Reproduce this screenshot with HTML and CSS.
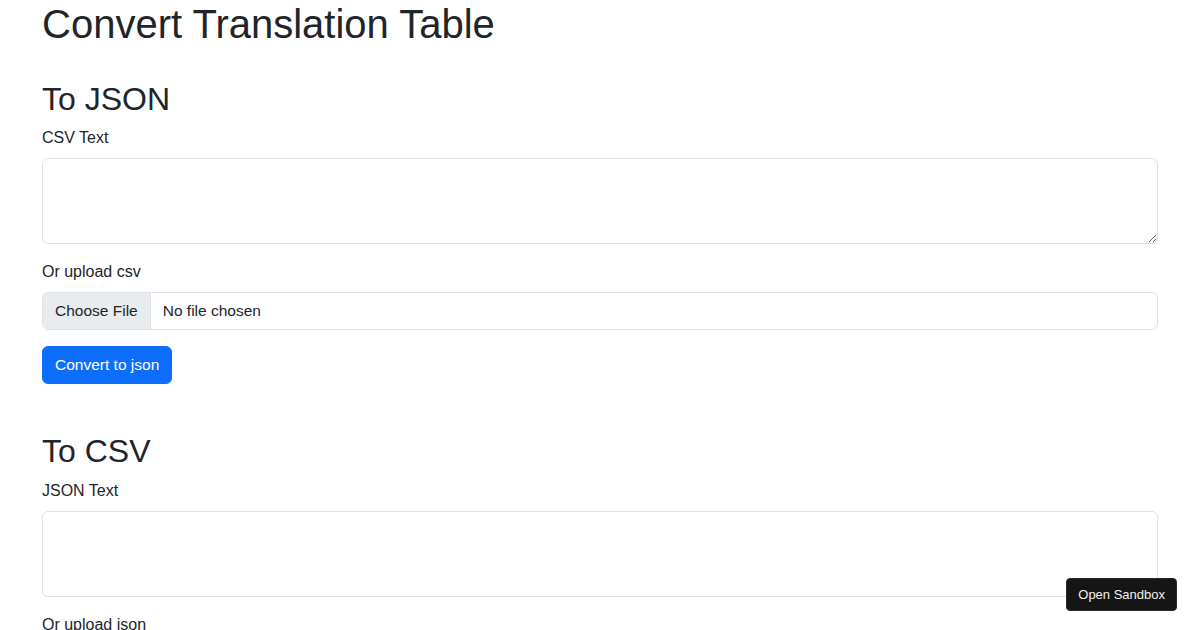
FILE: index.html
```html
<!DOCTYPE html>
<html lang="en">
<head>
<meta charset="utf-8">
<title>Convert Translation Table</title>
<link rel="stylesheet" href="styles.css">
</head>
<body>
<div class="container">
  <h1 class="title">Convert Translation Table</h1>

  <section class="section first">
    <h2 class="heading">To JSON</h2>
    <div class="field">
      <label class="label" for="csvText">CSV Text</label>
      <textarea class="control area" id="csvText" rows="3"></textarea>
    </div>
    <div class="field">
      <label class="label" for="csvFile">Or upload csv</label>
      <input class="control file" type="file" id="csvFile">
    </div>
    <button class="btn" type="button">Convert to json</button>
  </section>

  <section class="section second">
    <h2 class="heading">To CSV</h2>
    <div class="field">
      <label class="label" for="jsonText">JSON Text</label>
      <textarea class="control area" id="jsonText" rows="3"></textarea>
    </div>
    <div class="field">
      <label class="label" for="jsonFile">Or upload json</label>
      <input class="control file" type="file" id="jsonFile">
    </div>
    <button class="btn" type="button">Convert to csv</button>
  </section>
</div>

<button class="sandbox" type="button">Open Sandbox</button>
</body>
</html>
```

FILE: styles.css
```css
*, *::before, *::after { box-sizing: border-box; }

html, body {
  margin: 0;
  padding: 0;
}

body {
  font-family: "Liberation Sans", Arial, sans-serif;
  font-size: 16px;
  line-height: 1.5;
  color: #212529;
  background: #fff;
}

.container {
  max-width: 1140px;
  margin: 0 auto;
  padding: 0 12px;
}

.title {
  font-size: 40px;
  font-weight: 500;
  line-height: 1.2;
  margin: 0 0 8px;
}

.heading {
  font-size: 32px;
  font-weight: 500;
  line-height: 1.2;
  margin: 0 0 8px;
}

.section.first { margin-top: 32px; }
.section.second { margin-top: 48px; }

.field { margin-bottom: 16px; }

.label {
  display: inline-block;
  margin-bottom: 8px;
}

.control {
  display: block;
  width: 100%;
  padding: 6px 12px;
  font-family: "Liberation Sans", Arial, sans-serif;
  font-size: 15.5px;
  line-height: 24px;
  color: #212529;
  background: #fff;
  border: 1px solid #dee2e6;
  border-radius: 6px;
  overflow: hidden;
}

.area {
  min-height: 86px;
  height: 86px;
  resize: vertical;
}

.file::file-selector-button {
  font: inherit;
  color: #212529;
  background: #e9ecef;
  padding: 6px 12px;
  margin: -6px -12px;
  margin-inline-end: 12px;
  border: 0;
  border-inline-end: 1px solid #dee2e6;
  border-radius: 0;
}

.btn {
  display: inline-block;
  font-family: "Liberation Sans", Arial, sans-serif;
  font-size: 15.5px;
  line-height: 24px;
  color: #fff;
  background: #0d6efd;
  border: 1px solid #0d6efd;
  border-radius: 6px;
  padding: 6px 12px;
}

.sandbox {
  position: fixed;
  right: 23px;
  bottom: 19px;
  font-family: "Liberation Sans", Arial, sans-serif;
  font-size: 13px;
  line-height: 17px;
  color: #f0f0f0;
  background: #151515;
  border: 1px solid #2a2a2a;
  border-radius: 4px;
  padding: 7px 11px;
}
```
